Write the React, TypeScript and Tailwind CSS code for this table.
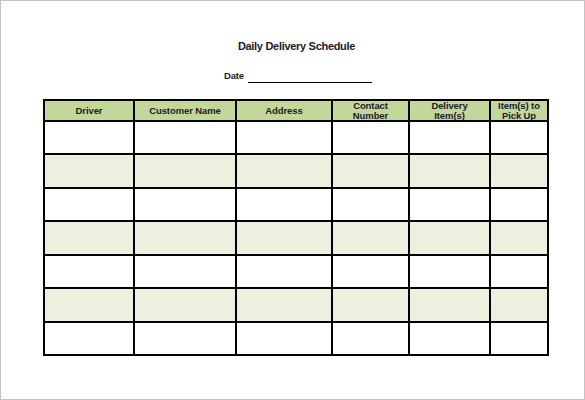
const columns = [
  { label: ["Driver"], width: "w-[90px]" },
  { label: ["Customer Name"], width: "w-[102px]" },
  { label: ["Address"], width: "w-[96px]" },
  { label: ["Contact", "Number"], width: "w-[77px]" },
  { label: ["Delivery", "Item(s)"], width: "w-[81px]" },
  { label: ["Item(s) to", "Pick Up"], width: "w-[58px]" },
]

const rowHeights = ["h-[33px]", "h-[34px]", "h-[33px]", "h-[34px]", "h-[33px]", "h-[34px]", "h-[33px]"]

export default function App() {
  return (
    <div
      className="w-[585px] h-[400px] bg-white border border-[#c3c3c3] text-[#1a1a2a]"
      style={{ fontFamily: '"Liberation Sans", Arial, sans-serif' }}
    >
      {/* Title */}
      <div className="pt-[39px] text-center text-[11px] font-bold leading-[13px] tracking-[-0.3px] pl-[8px]">
        Daily Delivery Schedule
      </div>

      {/* Date line */}
      <div className="mt-[17px] flex items-end pl-[223px]">
        <span className="text-[9.5px] font-bold leading-[11px] tracking-[-0.2px]">Date</span>
        <span className="ml-[4px] w-[124px] border-b border-black mb-[-2px]" />
      </div>

      {/* Table */}
      <div className="mt-[18px] ml-[42px] w-fit border-r-2 border-b-2 border-black">
        <div className="flex">
          {columns.map((col) => (
            <div
              key={col.label.join(" ")}
              className={`${col.width} h-[21px] border-l-2 border-t-2 border-black bg-[#c4d79b] flex flex-col items-center justify-center text-[9.5px] font-bold leading-[10px] tracking-[-0.1px]`}
            >
              {col.label.map((line) => (
                <span key={line}>{line}</span>
              ))}
            </div>
          ))}
        </div>
        {rowHeights.map((h, i) => (
          <div key={i} className="flex">
            {columns.map((col) => (
              <div
                key={col.label.join(" ")}
                className={`${col.width} ${h} border-l-2 border-t-2 border-black ${i % 2 === 1 ? "bg-[#ebf1de]" : "bg-white"}`}
              />
            ))}
          </div>
        ))}
      </div>
    </div>
  )
}
